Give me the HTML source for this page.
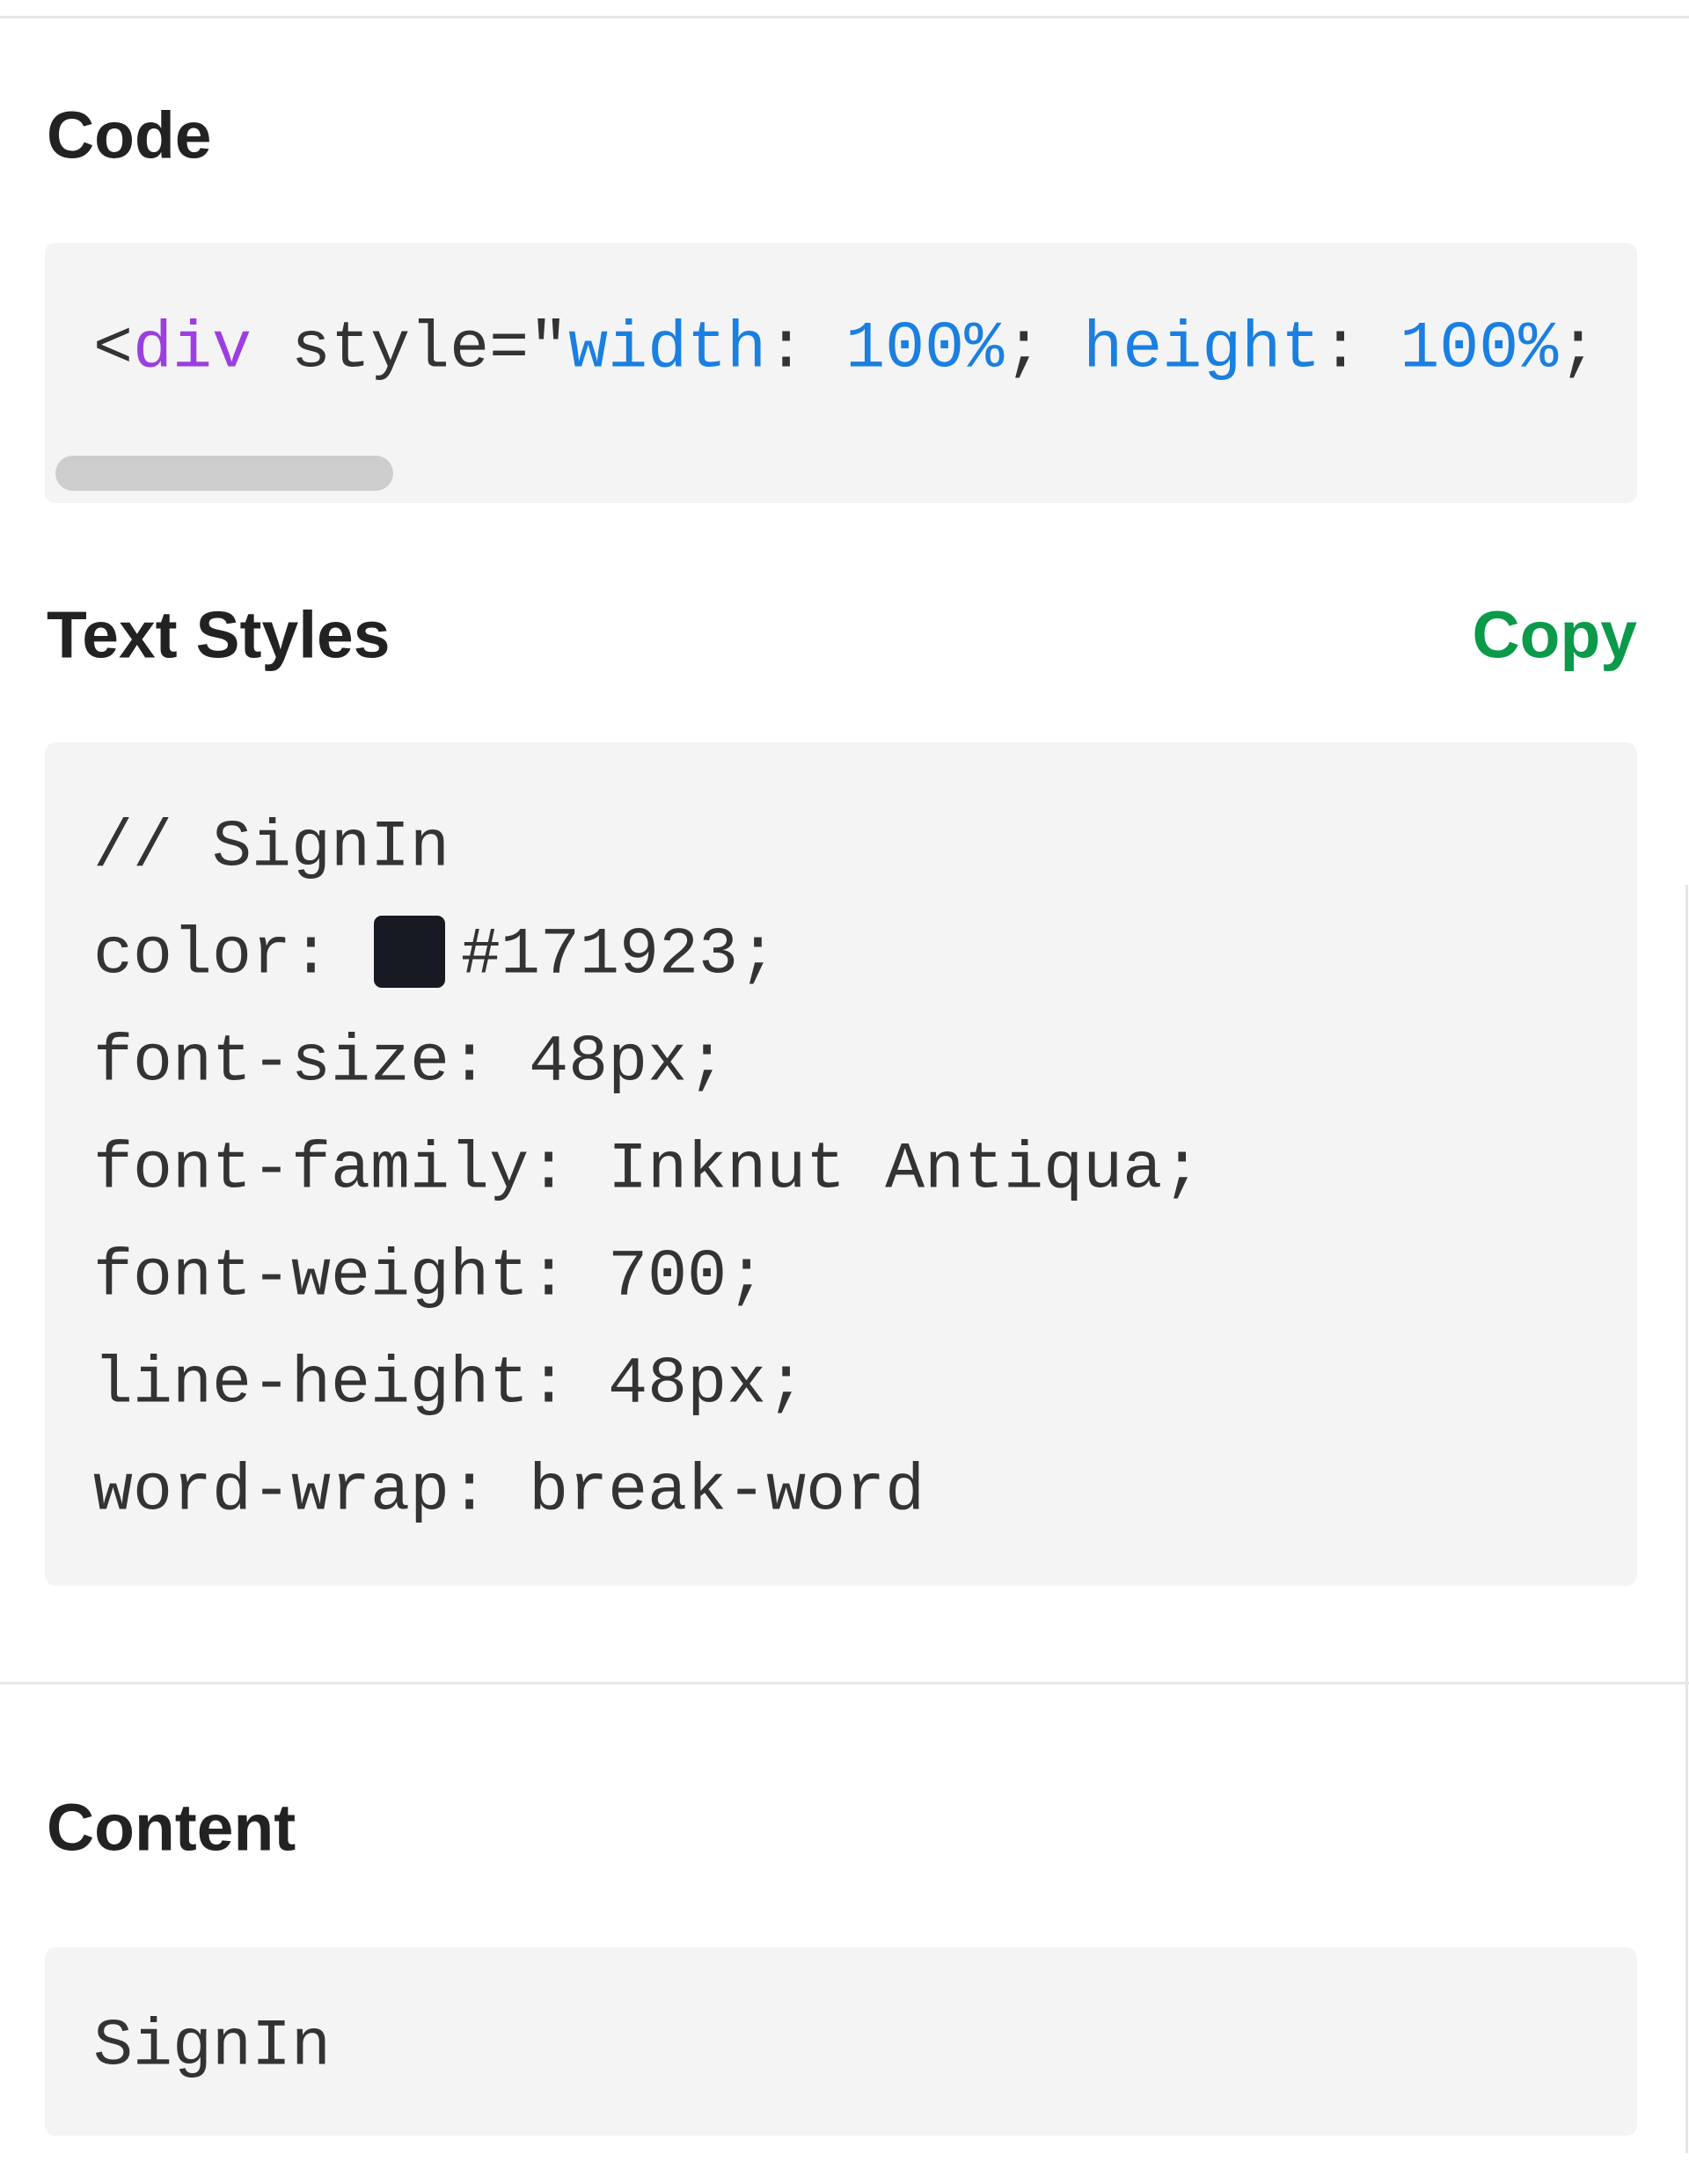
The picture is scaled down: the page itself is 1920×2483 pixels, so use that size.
<!DOCTYPE html>
<html><head><meta charset="utf-8"><style>
*{margin:0;padding:0;box-sizing:border-box}
html,body{width:1920px;height:2483px;background:#fff;overflow:hidden;position:relative;font-family:"Liberation Sans",sans-serif}
.a{position:absolute}
.h{position:absolute;left:53px;font-size:75px;font-weight:700;color:#222;line-height:1;transform:translateY(-50%)}
.box{position:absolute;left:51px;width:1810px;background:#f4f4f4;border-radius:12px}
.m{position:absolute;left:106px;font-family:"Liberation Mono",monospace;font-size:75px;color:#333;line-height:1;white-space:pre;transform:translateY(-50%)}
</style></head><body>
<div class="a" style="left:0;top:18px;width:1920px;height:3px;background:#e6e6e6"></div>
<div class="h" style="top:154px">Code</div>
<div class="box" style="top:276px;height:296px"></div>
<div class="m" style="top:397px"><span>&lt;</span><span style="color:#9b3fe0">div</span> style="<span style="color:#1a7fe0">width</span>: <span style="color:#1a7fe0">100%</span>; <span style="color:#1a7fe0">height</span>: <span style="color:#1a7fe0">100%</span>;</div>
<div class="a" style="left:63px;top:518px;width:384px;height:40px;border-radius:20px;background:#cdcdcd"></div>
<div class="h" style="top:722px">Text Styles</div>
<div class="h" style="top:722px;left:auto;right:59px;color:#0b9a49">Copy</div>
<div class="box" style="top:844px;height:959px"></div>
<div class="m" style="top:964px">// SignIn</div>
<div class="m" style="top:1086px">color:</div>
<div class="a" style="left:425px;top:1041px;width:81px;height:82px;border-radius:9px;background:#171923"></div>
<div class="m" style="top:1086px;left:524px">#171923;</div>
<div class="m" style="top:1208px">font-size: 48px;</div>
<div class="m" style="top:1330px">font-family: Inknut Antiqua;</div>
<div class="m" style="top:1452px">font-weight: 700;</div>
<div class="m" style="top:1574px">line-height: 48px;</div>
<div class="m" style="top:1696px">word-wrap: break-word</div>
<div class="a" style="left:0;top:1912px;width:1920px;height:3px;background:#e6e6e6"></div>
<div class="a" style="left:1916px;top:1006px;width:3px;height:1442px;background:#e6e6e6"></div>
<div class="h" style="top:2078px">Content</div>
<div class="box" style="top:2214px;height:214px"></div>
<div class="m" style="top:2327px">SignIn</div>
</body></html>
